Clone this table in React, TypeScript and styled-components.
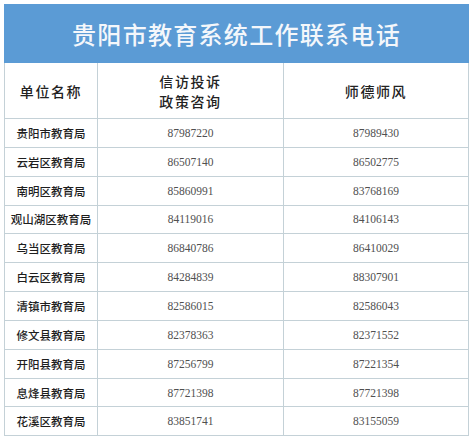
import React from 'react';
import styled, { createGlobalStyle } from 'styled-components';

interface Contact {
  unit: string;
  petition: string;
  ethics: string;
}

const contacts: Contact[] = [
  { unit: '贵阳市教育局', petition: '87987220', ethics: '87989430' },
  { unit: '云岩区教育局', petition: '86507140', ethics: '86502775' },
  { unit: '南明区教育局', petition: '85860991', ethics: '83768169' },
  { unit: '观山湖区教育局', petition: '84119016', ethics: '84106143' },
  { unit: '乌当区教育局', petition: '86840786', ethics: '86410029' },
  { unit: '白云区教育局', petition: '84284839', ethics: '88307901' },
  { unit: '清镇市教育局', petition: '82586015', ethics: '82586043' },
  { unit: '修文县教育局', petition: '82378363', ethics: '82371552' },
  { unit: '开阳县教育局', petition: '87256799', ethics: '87221354' },
  { unit: '息烽县教育局', petition: '87721398', ethics: '87721398' },
  { unit: '花溪区教育局', petition: '83851741', ethics: '83155059' },
];

const GlobalStyle = createGlobalStyle`
  html, body {
    margin: 0;
    padding: 0;
    background: #ffffff;
  }
  body {
    font-family: "Noto Sans CJK SC", "Noto Sans", sans-serif;
  }
`;

const Page = styled.div`
  padding: 4px 6px 4px 4px;
`;

const Table = styled.table`
  width: 464px;
  border-collapse: collapse;
  table-layout: fixed;
  border: 1.5px solid #c4d1d7;
`;

const TitleCell = styled.th`
  height: 57px;
  padding: 0;
  background: #5b9bd5;
  color: #f4f7fb;
  font-size: 24px;
  font-weight: 500;
  letter-spacing: 1.3px;
  text-align: center;
  border: 1.5px solid #5b9bd5;
`;

const HeadCell = styled.th`
  height: 55px;
  padding: 0;
  font-size: 14px;
  font-weight: 500;
  line-height: 20px;
  letter-spacing: 1.6px;
  color: #222222;
  text-align: center;
  border: 1.5px solid #c4d1d7;
`;

const HeadLine = styled.div`
  height: 20px;
`;

const Cell = styled.td<{ $numeric?: boolean }>`
  height: 27.85px;
  padding: 0;
  text-align: center;
  border: 1.5px solid #c4d1d7;
  white-space: nowrap;
  font-family: ${p => (p.$numeric ? '"Liberation Serif", serif' : '"Noto Sans CJK SC", sans-serif')};
  font-size: 11.5px;
  font-weight: ${p => (p.$numeric ? 400 : 500)};
  color: ${p => (p.$numeric ? '#505050' : '#1e1e1e')};
`;

const App: React.FC = () => {
  return (
    <Page>
      <GlobalStyle />
      <Table>
        <colgroup>
          <col style={{ width: 93 }} />
          <col style={{ width: 186 }} />
          <col style={{ width: 185 }} />
        </colgroup>
        <thead>
          <tr>
            <TitleCell colSpan={3}>贵阳市教育系统工作联系电话</TitleCell>
          </tr>
          <tr>
            <HeadCell>单位名称</HeadCell>
            <HeadCell>
              <HeadLine>信访投诉</HeadLine>
              <HeadLine>政策咨询</HeadLine>
            </HeadCell>
            <HeadCell>师德师风</HeadCell>
          </tr>
        </thead>
        <tbody>
          {contacts.map(c => (
            <tr key={c.unit}>
              <Cell>{c.unit}</Cell>
              <Cell $numeric>{c.petition}</Cell>
              <Cell $numeric>{c.ethics}</Cell>
            </tr>
          ))}
        </tbody>
      </Table>
    </Page>
  );
};

export default App;
